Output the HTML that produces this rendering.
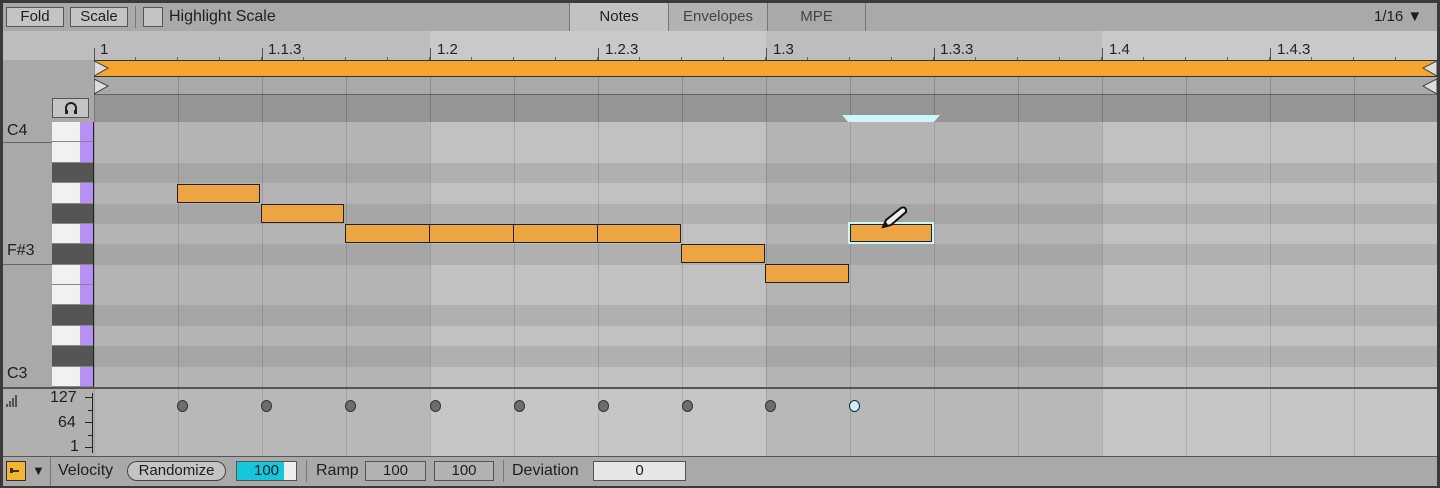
<!DOCTYPE html>
<html><head><meta charset="utf-8"><style>
*{margin:0;padding:0;box-sizing:border-box}
body{width:1440px;height:488px;background:#3a3a3a;position:relative;overflow:hidden;font-family:"Liberation Sans",sans-serif;color:#1e1e1e}
.a{position:absolute}
.btn{position:absolute;background:#c4c4c4;border:1px solid #555;font-size:15px;text-align:center;line-height:18px}
.fld{position:absolute;border:1px solid #555;font-size:15px;text-align:center;line-height:18px;background:#b2b2b2}
.t{position:absolute;font-size:15px;line-height:18px}
.rl{position:absolute;top:42px;font-size:15px;line-height:16px;color:#222}
.note{position:absolute;height:19px;background:#eda442;border:1px solid #222}
.dot{position:absolute;width:11px;height:12px;border-radius:50%;background:#6d6d6d;border:1px solid #333}
</style></head><body>
<div class="a" style="left:3px;top:3px;width:1434px;height:28px;background:#a9a9a9"></div>
<div class="btn" style="left:6px;top:7px;width:58px;height:20px">Fold</div>
<div class="btn" style="left:70px;top:7px;width:58px;height:20px">Scale</div>
<div class="a" style="left:135px;top:6px;width:1px;height:22px;background:#777"></div>
<div class="btn" style="left:143px;top:7px;width:20px;height:20px"></div>
<div class="t" style="left:169px;top:8px;font-size:16px">Highlight Scale</div>
<div class="a" style="left:569px;top:3px;width:1px;height:28px;background:#777"></div>
<div class="a" style="left:570px;top:3px;width:98px;height:28px;background:#c2c2c2;text-align:center;font-size:15px;line-height:28px">Notes</div>
<div class="a" style="left:668px;top:3px;width:99px;height:28px;background:#b2b2b2;border-left:1px solid #777;text-align:center;font-size:15px;line-height:28px;color:#444">Envelopes</div>
<div class="a" style="left:767px;top:3px;width:99px;height:28px;border-left:1px solid #777;border-right:1px solid #777;text-align:center;font-size:15px;line-height:28px;color:#444">MPE</div>
<div class="t" style="left:1374px;top:8px">1/16 ▼</div>
<div class="a" style="left:3px;top:31px;width:1434px;height:29px;background:#bdbdbd"></div>
<div class="a" style="left:430px;top:31px;width:336px;height:29px;background:#c9c9c9"></div>
<div class="a" style="left:1102px;top:31px;width:335px;height:29px;background:#c9c9c9"></div>
<div class="rl" style="left:100px">1</div>
<div class="rl" style="left:268px">1.1.3</div>
<div class="rl" style="left:437px">1.2</div>
<div class="rl" style="left:605px">1.2.3</div>
<div class="rl" style="left:773px">1.3</div>
<div class="rl" style="left:940px">1.3.3</div>
<div class="rl" style="left:1109px">1.4</div>
<div class="rl" style="left:1277px">1.4.3</div>
<div class="a" style="left:94px;top:31px;width:1343px;height:29px;background:repeating-linear-gradient(90deg,transparent 0 41px,#666 41px 42px) bottom/100% 3px no-repeat"></div>
<div class="a" style="left:94px;top:31px;width:1343px;height:29px;background:repeating-linear-gradient(90deg,#555 0 1px,transparent 1px 168px) bottom/100% 12px no-repeat"></div>
<div class="a" style="left:3px;top:60px;width:91px;height:62px;background:#a9a9a9"></div>
<div class="btn" style="left:52px;top:98px;width:37px;height:20px"></div>
<svg class="a" style="left:63px;top:101px" width="16" height="15"><path d="M3 11 V7 A5 5 0 0 1 13 7 V11" fill="none" stroke="#222" stroke-width="2"/><rect x="2" y="9" width="3" height="4" fill="#222"/><rect x="11" y="9" width="3" height="4" fill="#222"/></svg>
<div class="a" style="left:94px;top:60px;width:1343px;height:17px;background:#f5a42e;border-top:1px solid #333;border-bottom:1px solid #333"></div>
<div class="a" style="left:94px;top:77px;width:1343px;height:18px;background:#a9a9a9;border-bottom:1px solid #666"></div>
<div class="a" style="left:94px;top:95px;width:1343px;height:27px;background:#959595"></div>
<svg class="a" style="left:94px;top:60px" width="1343" height="36"><path d="M0 1 L14 8 L0 16Z M0 19 L14 26 L0 34Z" fill="#ddd" stroke="#444"/><path d="M1343 1 L1329 8 L1343 16Z M1343 19 L1329 26 L1343 34Z" fill="#ddd" stroke="#444"/></svg>
<div class="a" style="left:94px;top:77px;width:1343px;height:45px;background:repeating-linear-gradient(90deg,rgba(0,0,0,.18) 0 1px,transparent 1px 84px)"></div>
<svg class="a" style="left:842px;top:115px" width="100" height="8"><path d="M0 0 L98 0 L92 7 L6 7Z" fill="#cdf6fb"/></svg>
<div class="a" style="left:3px;top:122px;width:49px;height:265px;background:#a9a9a9"></div>
<div class="a" style="left:3px;top:142px;width:49px;height:1px;background:#666"></div>
<div class="a" style="left:3px;top:264px;width:49px;height:1px;background:#666"></div>
<div class="t" style="left:7px;top:122px;font-size:16px">C4</div>
<div class="t" style="left:7px;top:242px;font-size:16px">F#3</div>
<div class="t" style="left:7px;top:365px;font-size:16px">C3</div>
<div id="rows"></div>
<div class="a" style="left:94px;top:122px;width:1343px;height:265px;background:repeating-linear-gradient(90deg,rgba(0,0,0,.13) 0 1px,transparent 1px 84px)"></div>
<div class="a" style="left:93px;top:122px;width:1px;height:265px;background:#222"></div>
<div class="note" style="left:177px;top:184px;width:83px"></div>
<div class="note" style="left:261px;top:204px;width:83px"></div>
<div class="note" style="left:345px;top:224px;width:85px"></div>
<div class="note" style="left:429px;top:224px;width:85px"></div>
<div class="note" style="left:513px;top:224px;width:85px"></div>
<div class="note" style="left:597px;top:224px;width:84px"></div>
<div class="note" style="left:681px;top:244px;width:84px"></div>
<div class="note" style="left:765px;top:264px;width:84px"></div>
<div class="note" style="left:850px;top:224px;width:82px;height:18px;box-shadow:0 0 0 2px #cdf6fb"></div>
<svg class="a" style="left:878px;top:204px" width="32" height="28"><path d="M5 23 L8 16 L23 4 Q27 2 28 6 L28 8 L13 21 Z" fill="#eee" stroke="#111" stroke-width="2"/><path d="M5 23 L8 18 L10 21Z" fill="#111"/></svg>
<div class="a" style="left:3px;top:387px;width:1434px;height:2px;background:#555"></div>
<div class="a" style="left:3px;top:389px;width:91px;height:67px;background:#b0b0b0"></div>
<div class="a" style="left:94px;top:389px;width:1343px;height:67px;background:#c6c6c6"></div>
<div class="a" style="left:94px;top:389px;width:336px;height:67px;background:#b8b8b8"></div>
<div class="a" style="left:766px;top:389px;width:336px;height:67px;background:#b8b8b8"></div>
<div class="a" style="left:94px;top:389px;width:1343px;height:67px;background:repeating-linear-gradient(90deg,rgba(0,0,0,.12) 0 1px,transparent 1px 84px)"></div>
<svg class="a" style="left:6px;top:395px" width="14" height="14"><path d="M1 12V9M4 12V6M7 12V3M10 12V0" stroke="#333" stroke-width="1.5"/></svg>
<div class="t" style="left:50px;top:389px;font-size:16px">127</div>
<div class="t" style="left:58px;top:414px;font-size:16px">64</div>
<div class="t" style="left:70px;top:438px;font-size:16px">1</div>
<div class="a" style="left:92px;top:393px;width:1px;height:60px;background:#222"></div>
<div class="a" style="left:85px;top:397px;width:7px;height:1px;background:#222"></div>
<div class="a" style="left:88px;top:410px;width:4px;height:1px;background:#222"></div>
<div class="a" style="left:85px;top:422px;width:7px;height:1px;background:#222"></div>
<div class="a" style="left:88px;top:435px;width:4px;height:1px;background:#222"></div>
<div class="a" style="left:85px;top:447px;width:7px;height:1px;background:#222"></div>
<div class="dot" style="left:177px;top:400px"></div>
<div class="dot" style="left:261px;top:400px"></div>
<div class="dot" style="left:345px;top:400px"></div>
<div class="dot" style="left:430px;top:400px"></div>
<div class="dot" style="left:514px;top:400px"></div>
<div class="dot" style="left:598px;top:400px"></div>
<div class="dot" style="left:682px;top:400px"></div>
<div class="dot" style="left:765px;top:400px"></div>
<div class="dot" style="left:849px;top:400px;background:#c8f4fb;border-color:#222"></div>
<div class="a" style="left:3px;top:456px;width:1434px;height:30px;background:#a9a9a9;border-top:1px solid #555"></div>
<div class="a" style="left:6px;top:461px;width:20px;height:20px;background:#f5b531;border:1px solid #333"></div>
<div class="a" style="left:10px;top:470px;width:9px;height:2px;background:#333"></div>
<div class="a" style="left:10px;top:468px;width:3px;height:5px;background:#333"></div>
<div class="t" style="left:32px;top:462px;font-size:13px">▼</div>
<div class="a" style="left:50px;top:457px;width:1px;height:29px;background:#777"></div>
<div class="t" style="left:58px;top:462px;font-size:16px">Velocity</div>
<div class="a" style="left:127px;top:461px;width:99px;height:20px;border:1px solid #444;border-radius:10px;background:#c4c4c4;font-size:15px;text-align:center;line-height:18px">Randomize</div>
<div class="fld" style="left:236px;top:461px;width:61px;height:20px;background:linear-gradient(90deg,#16c6dc 0 47px,#eee 47px)">100</div>
<div class="a" style="left:306px;top:460px;width:1px;height:22px;background:#777"></div>
<div class="t" style="left:316px;top:462px;font-size:16px">Ramp</div>
<div class="fld" style="left:365px;top:461px;width:61px;height:20px">100</div>
<div class="fld" style="left:434px;top:461px;width:60px;height:20px">100</div>
<div class="a" style="left:503px;top:460px;width:1px;height:22px;background:#777"></div>
<div class="t" style="left:512px;top:462px;font-size:16px">Deviation</div>
<div class="fld" style="left:593px;top:461px;width:93px;height:20px;background:#e6e6e6">0</div>
<script>
var pat=[0,0,1,0,1,0,1,0,0,1,0,1,0];var h='';
for(var i=0;i<13;i++){var y=Math.round(122+i*265/13),y2=Math.round(122+(i+1)*265/13),hh=y2-y,b=pat[i];
h+='<div class="a" style="left:52px;top:'+y+'px;width:41px;height:'+hh+'px;background:'+(b?'#555':'#f1f1f1')+';border-bottom:1px solid #888"></div>';
if(!b)h+='<div class="a" style="left:80px;top:'+y+'px;width:13px;height:'+(hh-1)+'px;background:#b690f5"></div>';
var c1=b?'#a6a6a6':'#b4b4b4',c2=b?'#b0b0b0':'#c1c1c1';
h+='<div class="a" style="left:94px;top:'+y+'px;width:1343px;height:'+hh+'px;background:linear-gradient(90deg,'+c1+' 0 336px,'+c2+' 336px 672px,'+c1+' 672px 1008px,'+c2+' 1008px)"></div>';}
document.getElementById('rows').outerHTML=h;
</script>
</body></html>
